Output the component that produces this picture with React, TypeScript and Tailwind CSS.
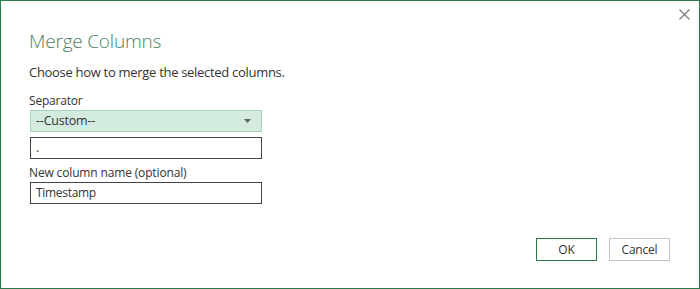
import React from "react";

export default function App() {
  return (
    <div
      className="w-[700px] h-[289px] border border-[#2b7a4b] bg-white relative text-[#333]"
      style={{ fontFamily: '"Open Sans", "Noto Sans", sans-serif' }}
    >
      <button className="absolute left-[677px] top-[7px] w-[12px] h-[12px] flex items-center justify-center">
        <svg width="11" height="11" viewBox="0 0 11 11">
          <path d="M0.5 0.5 L10.5 10.5 M10.5 0.5 L0.5 10.5" stroke="#7a7a7a" strokeWidth="1.1" fill="none" />
        </svg>
      </button>
      <div className="flex flex-col pl-[28px] pt-[27px]">
        <h1 className="text-[19px] leading-[26px] font-light text-[#4d7f66] tracking-[-0.2px]">Merge Columns</h1>
        <p className="mt-[9px] text-[13px] leading-[18px] tracking-[-0.3px]">Choose how to merge the selected columns.</p>
        <label className="mt-[12px] text-[12px] leading-[16px] tracking-[-0.2px]">Separator</label>
        <div className="mt-[1px] ml-[1px] w-[232px] h-[22px] bg-[#d3ecdd] border border-[#a6d3ba] flex items-center justify-between pl-[5px] pr-[10px]">
          <span className="text-[12.5px] leading-[16px] tracking-[-0.2px]">--Custom--</span>
          <svg width="7" height="4" viewBox="0 0 7 4">
            <path d="M0 0 L7 0 L3.5 4 Z" fill="#666" />
          </svg>
        </div>
        <div className="mt-[5px] ml-[1px] w-[232px] h-[22px] border border-[#444] flex items-center pl-[5px]">
          <span className="text-[12.5px] leading-[16px]">.</span>
        </div>
        <label className="mt-[6px] text-[12px] leading-[16px] tracking-[-0.15px]">New column name (optional)</label>
        <div className="mt-[1px] ml-[1px] w-[232px] h-[22px] border border-[#444] flex items-center pl-[5px]">
          <span className="text-[12px] leading-[16px] tracking-[-0.3px]">Timestamp</span>
        </div>
      </div>
      <div className="absolute left-[535px] top-[237px] flex gap-[12px]">
        <button className="w-[61px] h-[23px] border border-[#2b7a4b] text-[12px] leading-[16px] text-[#333] bg-white tracking-[-0.2px]">OK</button>
        <button className="w-[61px] h-[23px] border border-[#c4c4c4] text-[12px] leading-[16px] text-[#333] bg-white tracking-[-0.2px]">Cancel</button>
      </div>
    </div>
  );
}
